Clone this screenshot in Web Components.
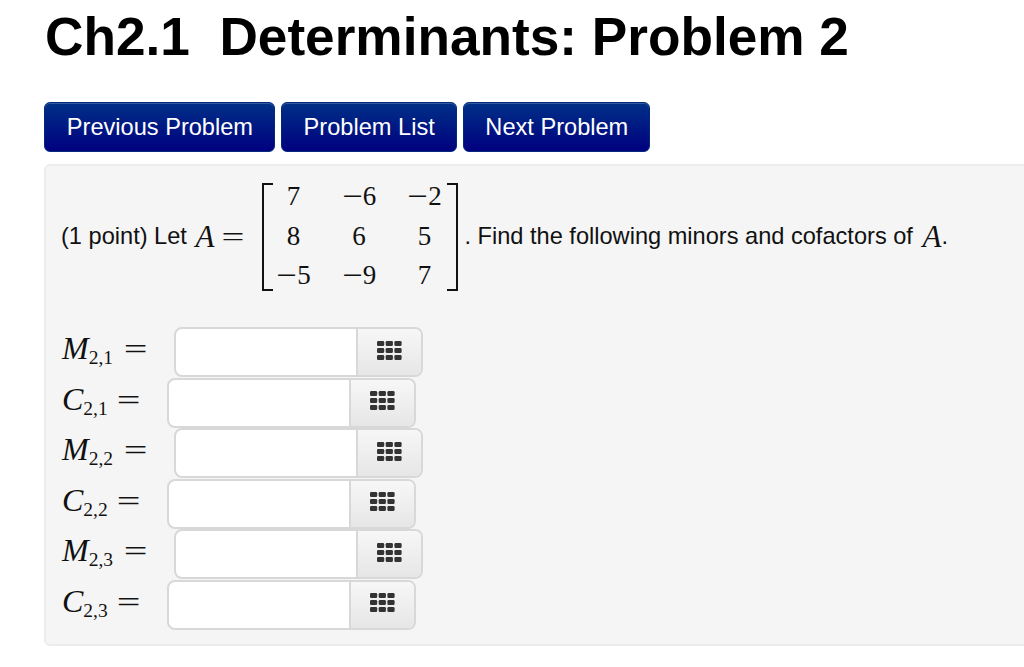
<!DOCTYPE html>
<html lang="en">
<head>
<meta charset="utf-8">
<title>Ch2.1 Determinants: Problem 2</title>
<style>
  html, body { margin: 0; height: 667px; overflow: hidden; background: #fff; }
  body { padding: 0 0 0 44px; font-family: "Liberation Sans", Arial, sans-serif; color: #111; }
</style>
</head>
<body>
<problem-title>Ch2.1&nbsp; Determinants: Problem 2</problem-title>
<nav-bar>
  <nav-button>Previous Problem</nav-button>
  <nav-button>Problem List</nav-button>
  <nav-button>Next Problem</nav-button>
</nav-bar>
<problem-panel>
  <problem-statement></problem-statement>
  <answer-row letter="M" sub="2,1"></answer-row>
  <answer-row letter="C" sub="2,1"></answer-row>
  <answer-row letter="M" sub="2,2"></answer-row>
  <answer-row letter="C" sub="2,2"></answer-row>
  <answer-row letter="M" sub="2,3"></answer-row>
  <answer-row letter="C" sub="2,3"></answer-row>
</problem-panel>

<script>
const MATH_FONT = '"Liberation Serif", "Times New Roman", serif';

class ProblemTitle extends HTMLElement {
  constructor() {
    super();
    this.attachShadow({ mode: "open" });
    this.shadowRoot.innerHTML = `
<style>
  :host { display: block; height: 102px; padding-left: 1px; box-sizing: border-box; }
  h1 { margin: 0; padding-top: 7px; font: bold 53.2px/60px "Liberation Sans", Arial, sans-serif; color: #000; white-space: nowrap; }
</style>
<h1><slot></slot></h1>`;
  }
}

class NavBar extends HTMLElement {
  constructor() {
    super();
    this.attachShadow({ mode: "open" });
    this.shadowRoot.innerHTML = `
<style>
  :host { display: flex; gap: 6px; height: 50px; }
</style>
<slot></slot>`;
  }
}

class NavButton extends HTMLElement {
  constructor() {
    super();
    this.attachShadow({ mode: "open" });
    this.shadowRoot.innerHTML = `
<style>
  :host { display: block; }
  button {
    height: 50px; padding: 2px 20.8px 0 21.8px; box-sizing: border-box;
    border: 1px solid #002b7a; border-radius: 6px;
    background: linear-gradient(#003087, #00007f);
    box-shadow: inset 0 1px 0 rgba(255,255,255,.2);
    color: #fff; font: 23.6px/1 "Liberation Sans", Arial, sans-serif; white-space: nowrap;
  }
</style>
<button><slot></slot></button>`;
  }
}

class ProblemPanel extends HTMLElement {
  constructor() {
    super();
    this.attachShadow({ mode: "open" });
    this.shadowRoot.innerHTML = `
<style>
  :host {
    display: block; box-sizing: border-box; width: 1000px; height: 482px; margin-top: 12px;
    padding: 9px 0 0 16px;
    background: #f5f5f5; border: 2px solid #ececec; border-radius: 6px;
  }
</style>
<slot></slot>`;
  }
}

class MatrixGrid extends HTMLElement {
  constructor() {
    super();
    this.attachShadow({ mode: "open" });
    const rows = [["7", "-6", "-2"], ["8", "6", "5"], ["-5", "-9", "7"]];
    const cells = rows.flat().map((v) => {
      const txt = v[0] === "-" ? `<b>−</b>${v.slice(1)}` : v;
      return `<span>${txt}</span>`;
    }).join("");
    this.shadowRoot.innerHTML = `
<style>
  :host {
    display: block; position: relative; box-sizing: border-box; width: 196px; height: 108px;
    font: 27px/39.5px ${MATH_FONT}; color: #111;
  }
  .grid { display: grid; grid-template-columns: 62px 69px 62px; grid-auto-rows: 39.5px;
    justify-items: center; align-content: center; height: 108px; }
  b { display: inline-block; width: 21px; font-weight: normal; text-align: center; transform: scaleX(1.35); }
  .b { position: absolute; top: 0; bottom: 0; width: 9px; border: solid #111; border-width: 2px 0; }
  .l { left: 0; border-left-width: 2px; }
  .r { right: 0; border-right-width: 2px; }
</style>
<i class="b l"></i><div class="grid">${cells}</div><i class="b r"></i>`;
  }
}

class ProblemStatement extends HTMLElement {
  constructor() {
    super();
    this.attachShadow({ mode: "open" });
    this.shadowRoot.innerHTML = `
<style>
  :host {
    display: flex; align-items: center; height: 123px; margin: 0 0 29px -1px;
    font: 23.6px/1 "Liberation Sans", Arial, sans-serif; color: #111; white-space: nowrap;
  }
  .m { font: italic 31px/1 ${MATH_FONT}; }
  .first { margin-left: 2px; }
  .last { margin-left: 3px; }
  .eq { display: inline-block; width: 22px; text-align: center; font: 28px/1 ${MATH_FONT}; margin: 0 18px 0 8px; transform: scaleX(1.45); }
  .lead { margin-left: 6px; }
</style>
<span>(1 point) Let&nbsp;</span><span class="m first">A</span><span class="eq">=</span>
<matrix-grid></matrix-grid>
<span class="lead">. Find the following minors and cofactors of&nbsp;</span><span class="m last">A</span><span>.</span>`;
  }
}

class GridIcon extends HTMLElement {
  constructor() {
    super();
    this.attachShadow({ mode: "open" });
    let rects = "";
    for (let y = 0; y < 3; y++) {
      for (let x = 0; x < 3; x++) {
        rects += `<rect x="${x * 8.7}" y="${y * 7}" width="7.2" height="5" rx="1.3"/>`;
      }
    }
    this.shadowRoot.innerHTML = `
<style>
  :host { display: block; width: 25px; height: 19px; margin-bottom: 4px; }
  svg { display: block; fill: #333; }
</style>
<svg width="25" height="19" viewBox="0 0 25 19">${rects}</svg>`;
  }
}

class AnswerRow extends HTMLElement {
  constructor() {
    super();
    this.attachShadow({ mode: "open" });
  }

  connectedCallback() {
    const letter = this.getAttribute("letter");
    const sub = this.getAttribute("sub");
    this.shadowRoot.innerHTML = `
<style>
  :host { display: flex; align-items: flex-start; height: 50.6px; color: #111; }
  .label { display: flex; align-items: baseline; padding-top: 1px; font: 32px/40px ${MATH_FONT}; white-space: nowrap; }
  .v { font-style: italic; }
  sub { font-size: 19.5px; line-height: 0; position: relative; top: 5px; vertical-align: baseline; }
  .eq { display: inline-block; width: 21px; margin-left: 12px; text-align: center; font-size: 30px; transform: scaleX(1.4); }
  :host([letter="C"]) .eq { margin-left: 10px; }
  .field { display: flex; width: 249px; height: 50px; margin-left: 28px; box-sizing: border-box;
    border: 2px solid #d8d8d8; border-radius: 8px; background: #fff; overflow: hidden; }
  input { flex: 1; min-width: 0; border: 0; padding: 0; background: transparent; }
  .btn { width: 63px; display: flex; align-items: center; justify-content: center;
    border-left: 2px solid #d8d8d8; background: linear-gradient(#f7f7f7, #e6e6e6); }
</style>
<div class="label"><span class="v">${letter}</span><sub>${sub}</sub><span class="eq">=</span></div>
<div class="field">
  <input type="text" aria-label="${letter} ${sub}">
  <div class="btn"><grid-icon></grid-icon></div>
</div>`;
  }
}

customElements.define("problem-title", ProblemTitle);
customElements.define("nav-bar", NavBar);
customElements.define("nav-button", NavButton);
customElements.define("problem-panel", ProblemPanel);
customElements.define("matrix-grid", MatrixGrid);
customElements.define("problem-statement", ProblemStatement);
customElements.define("grid-icon", GridIcon);
customElements.define("answer-row", AnswerRow);
</script>
</body>
</html>
